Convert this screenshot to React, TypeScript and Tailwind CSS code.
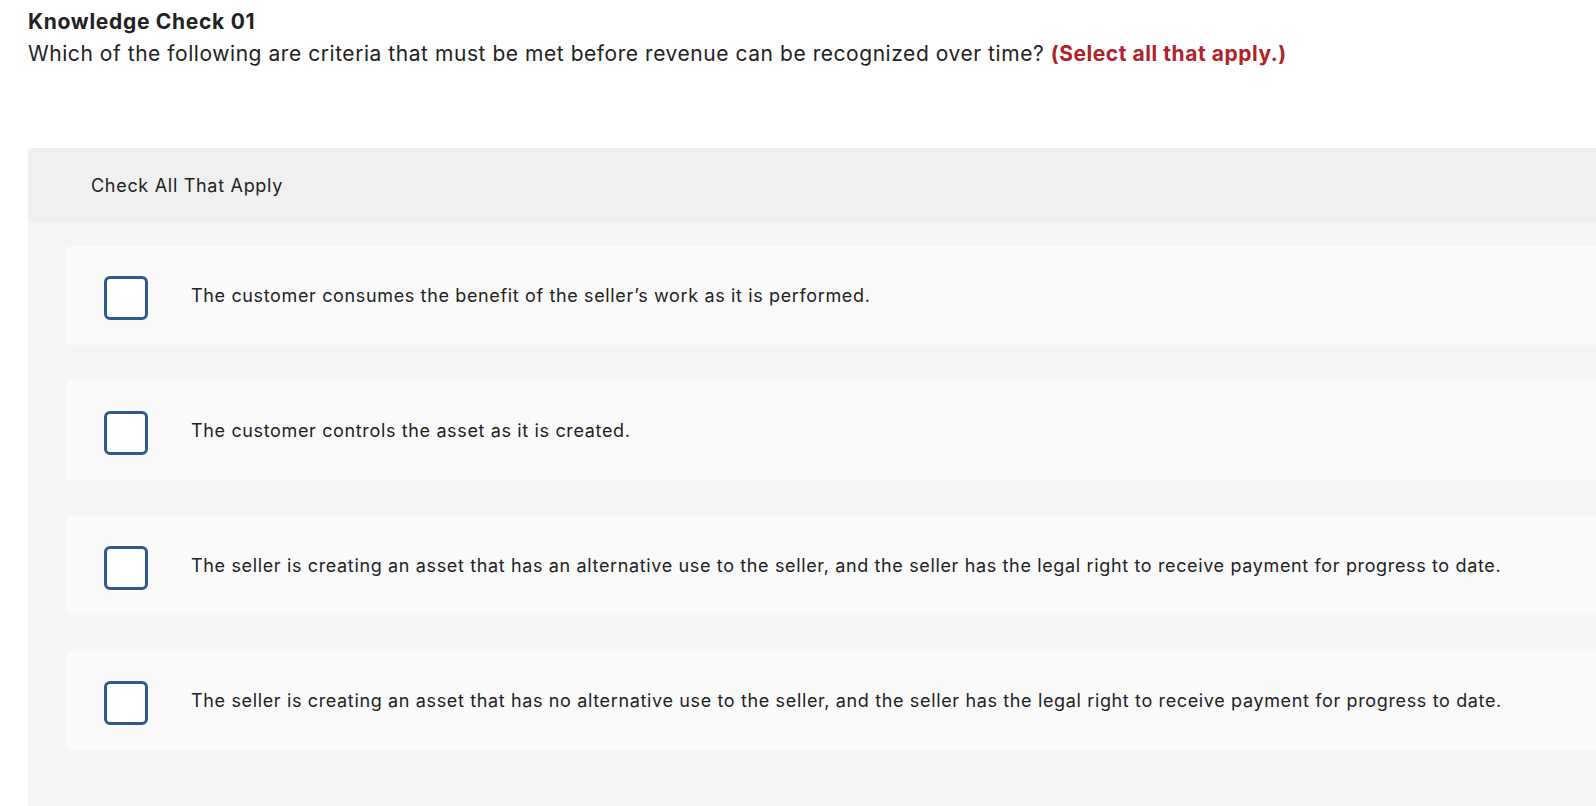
import React from "react";

const options = [
  "The customer consumes the benefit of the seller\u2019s work as it is performed.",
  "The customer controls the asset as it is created.",
  "The seller is creating an asset that has an alternative use to the seller, and the seller has the legal right to receive payment for progress to date.",
  "The seller is creating an asset that has no alternative use to the seller, and the seller has the legal right to receive payment for progress to date.",
];

export default function App() {
  return (
    <div
      className="h-[806px] overflow-hidden bg-white text-[#222222]"
      style={{ fontFamily: "Inter, 'Noto Sans', sans-serif" }}
    >
      <div className="pl-[28px] pt-[10px]">
        <h1 className="text-[21px] font-bold leading-[24px] tracking-[0.7px]">Knowledge Check 01</h1>
        <p className="mt-[5px] text-[21px] leading-[30px] tracking-[0.55px]">
          Which of the following are criteria that must be met before revenue can be recognized over time?{" "}
          <span className="font-bold text-[#b0232a]">(Select all that apply.)</span>
        </p>
      </div>
      <div className="ml-[28px] mt-[79px] h-[700px] rounded-tl-[4px] bg-[#f5f5f5]">
        <div className="flex h-[74px] items-center rounded-tl-[4px] bg-[#f0f0f0] pl-[63px] pt-[2px] text-[18px] leading-[24px] tracking-[0.7px]">
          Check All That Apply
        </div>
        <div className="flex flex-col gap-[36px] pl-[38px] pt-[24px]">
          {options.map((o, i) => (
            <div
              key={i}
              className="flex h-[99px] items-center rounded-l-[5px] bg-[#fafafa] pl-[38px]"
            >
              <div className="mt-[4px] h-[44px] w-[44px] shrink-0 rounded-[6px] border-[3.5px] border-[#2f5a8c] bg-white" />
              <div className="ml-[43px] text-[18px] leading-[24px] tracking-[0.64px]">{o}</div>
            </div>
          ))}
        </div>
      </div>
    </div>
  );
}
